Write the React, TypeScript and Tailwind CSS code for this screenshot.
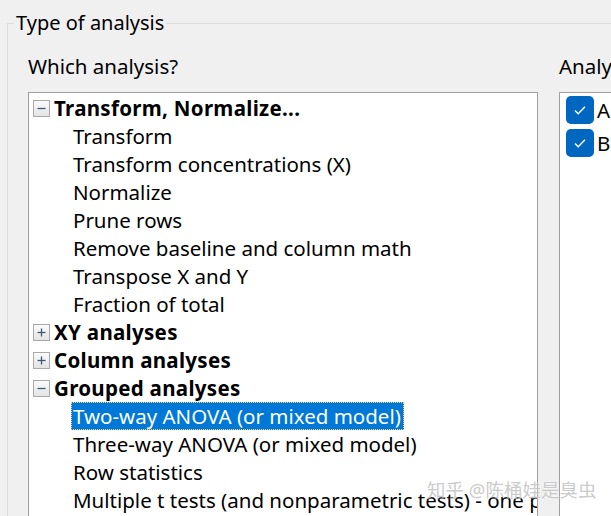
import React from "react";

type Row = { label: string; level: 0 | 1; expander?: "plus" | "minus"; selected?: boolean };

const rows: Row[] = [
  { label: "Transform, Normalize...", level: 0, expander: "minus" },
  { label: "Transform", level: 1 },
  { label: "Transform concentrations (X)", level: 1 },
  { label: "Normalize", level: 1 },
  { label: "Prune rows", level: 1 },
  { label: "Remove baseline and column math", level: 1 },
  { label: "Transpose X and Y", level: 1 },
  { label: "Fraction of total", level: 1 },
  { label: "XY analyses", level: 0, expander: "plus" },
  { label: "Column analyses", level: 0, expander: "plus" },
  { label: "Grouped analyses", level: 0, expander: "minus" },
  { label: "Two-way ANOVA (or mixed model)", level: 1, selected: true },
  { label: "Three-way ANOVA (or mixed model)", level: 1 },
  { label: "Row statistics", level: 1 },
  { label: "Multiple t tests (and nonparametric tests) - one per row", level: 1 },
  { label: "Nested t test", level: 1 },
];

const Expander = ({ kind }: { kind: "plus" | "minus" }) => (
  <div className="w-[17px] h-[17px] border border-[#a9a9a9] bg-gradient-to-b from-[#fbfbfb] to-[#e3e3e3] flex items-center justify-center shrink-0">
    <svg width="11" height="11" viewBox="0 0 11 11">
      <path d="M1.5 5.5h8" stroke="#3c5a7a" strokeWidth="1.3" />
      {kind === "plus" && <path d="M5.5 1.5v8" stroke="#3c5a7a" strokeWidth="1.3" />}
    </svg>
  </div>
);

const TreeRow = ({ row }: { row: Row }) => {
  if (row.level === 0) {
    return (
      <div className="h-[28px] flex items-center pl-[4px] whitespace-nowrap">
        {row.expander && <Expander kind={row.expander} />}
        <span className="ml-[4px] font-bold tracking-[0.3px] text-black">{row.label}</span>
      </div>
    );
  }
  return (
    <div className="h-[28px] flex items-center pl-[42px] whitespace-nowrap">
      <span
        className={
          row.selected
            ? "h-[28px] flex items-center pl-[2px] pr-[3px] bg-[#0078d7] text-white outline-1 outline-dotted outline-[#f3d27a] -outline-offset-1"
            : "pl-[2px] text-black"
        }
      >
        {row.label}
      </span>
    </div>
  );
};

const Check = () => (
  <div className="w-[28px] h-[28px] rounded-[5px] bg-[#0067c0] flex items-center justify-center shrink-0">
    <svg width="16" height="16" viewBox="0 0 16 16">
      <path d="M3 8.5l3.2 3.2L13 4.8" fill="none" stroke="white" strokeWidth="1.4" />
    </svg>
  </div>
);

const App = () => {
  return (
    <div
      className="relative w-[611px] h-[516px] overflow-hidden bg-[#f0f0f0] text-[20.5px] leading-[28px] text-black"
      style={{ fontFamily: "'Noto Sans', 'Open Sans', sans-serif" }}
    >
      <div className="absolute left-[7px] top-[23px] w-[700px] h-[600px] border border-[#dcdcdc]" />
      <div className="absolute left-[14px] top-[10px] px-[2px] bg-[#f0f0f0] text-[20px] leading-[26px]">Type of analysis</div>

      <div className="pt-[53px] pl-[28px] flex gap-[21px]">
        <div className="w-[510px] shrink-0 flex flex-col">
          <div className="h-[39px] leading-[26px]">Which analysis?</div>
          <div className="h-[440px] bg-white border border-[#a0a0a0] pt-[1px] overflow-hidden">
            {rows.map((r) => (
              <TreeRow key={r.label} row={r} />
            ))}
          </div>
        </div>
        <div className="w-[300px] shrink-0 flex flex-col">
          <div className="h-[39px] leading-[26px] whitespace-nowrap">Analyze which data sets?</div>
          <div className="h-[440px] bg-white border border-[#a0a0a0] pt-[3px] pl-[6px] flex flex-col gap-[5px]">
            <div className="flex items-center gap-[3px]">
              <Check />
              <span>A</span>
            </div>
            <div className="flex items-center gap-[3px]">
              <Check />
              <span>B</span>
            </div>
          </div>
        </div>
      </div>

      <div
        className="absolute left-[427px] top-[477px] text-[18.5px] leading-[26px] text-[#bdbdbd]/80 whitespace-nowrap [text-shadow:0_0_2px_rgba(255,255,255,0.9)]"
        style={{ fontFamily: "'Noto Sans', 'Noto Sans CJK SC', sans-serif" }}
      >
        知乎 @陈桶娃是臭虫
      </div>
    </div>
  );
};

export default App;
